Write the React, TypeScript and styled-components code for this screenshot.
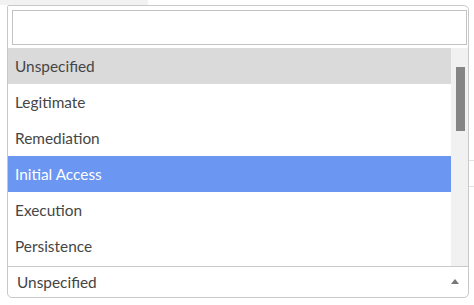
import React from "react";
import styled, { createGlobalStyle } from "styled-components";

const Global = createGlobalStyle`
  html, body { margin: 0; padding: 0; background: #ffffff; }
  body { font-family: Lato, "Noto Sans", sans-serif; width: 474px; height: 305px; overflow: hidden; position: relative; }
`;

const Page = styled.div`
  position: relative;
  width: 474px;
  height: 305px;
`;

const TopStrip = styled.div`
  width: 148px;
  height: 5px;
  background: #f2f2f2;
`;

const EdgeLine = styled.div<{ $top: number }>`
  position: absolute;
  right: 0;
  top: ${(p) => p.$top}px;
  width: 5px;
  height: 1px;
  background: #e2e2e2;
`;

const Dropdown = styled.div`
  margin-left: 7px;
  width: 460px;
  height: 291px;
  border: 1px solid #c9c9c9;
  border-radius: 2px 5px 5px 5px;
  display: flex;
  flex-direction: column;
  background: #fff;
  position: relative;
  z-index: 1;
`;

const SearchWrap = styled.div`
  padding: 4px 1px 3px 4px;
`;

const Search = styled.input`
  display: block;
  box-sizing: border-box;
  width: 455px;
  height: 35px;
  border: 1px solid #c3c3c3;
  border-radius: 0;
  outline: none;
  padding: 0 6px;
  font-family: Lato, sans-serif;
  font-size: 15px;
`;

const ListArea = styled.div`
  display: flex;
  height: 218px;
  border-bottom: 1px solid #c9c9c9;
`;

const Options = styled.ul`
  list-style: none;
  margin: 0;
  padding: 0;
  width: 443px;
  height: 218px;
  overflow: hidden;
`;

const Option = styled.li<{ $state?: "hover" | "active" }>`
  height: 36px;
  display: flex;
  align-items: center;
  padding-left: 7px;
  font-size: 15.4px;
  color: ${(p) => (p.$state === "active" ? "#ffffff" : "#464646")};
  background: ${(p) =>
    p.$state === "hover" ? "#dadada" : p.$state === "active" ? "#6b96f2" : "transparent"};
`;

const Gutter = styled.div`
  width: 17px;
  background: #f1f1f1;
  position: relative;
`;

const Thumb = styled.div`
  position: absolute;
  left: 5px;
  top: 19px;
  width: 9px;
  height: 64px;
  background: #858585;
`;

const Selected = styled.div`
  flex: 1;
  display: flex;
  align-items: center;
  justify-content: space-between;
  padding: 0 9px 0 9px;
  font-size: 15.4px;
  color: #444;
`;

const Arrow = styled.span`
  width: 0;
  height: 0;
  border-left: 4.5px solid transparent;
  border-right: 4.5px solid transparent;
  border-bottom: 5px solid #777;
  margin-top: -1px;
`;

const items = [
  { label: "Unspecified", state: "hover" as const },
  { label: "Legitimate" },
  { label: "Remediation" },
  { label: "Initial Access", state: "active" as const },
  { label: "Execution" },
  { label: "Persistence" },
];

export default function App() {
  return (
    <Page>
      <Global />
      <TopStrip />
      <EdgeLine $top={160} />
      <EdgeLine $top={186} />
      <Dropdown>
        <SearchWrap>
          <Search type="text" />
        </SearchWrap>
        <ListArea>
          <Options>
            {items.map((it) => (
              <Option key={it.label} $state={it.state}>
                {it.label}
              </Option>
            ))}
          </Options>
          <Gutter>
            <Thumb />
          </Gutter>
        </ListArea>
        <Selected>
          <span>Unspecified</span>
          <Arrow />
        </Selected>
      </Dropdown>
    </Page>
  );
}
